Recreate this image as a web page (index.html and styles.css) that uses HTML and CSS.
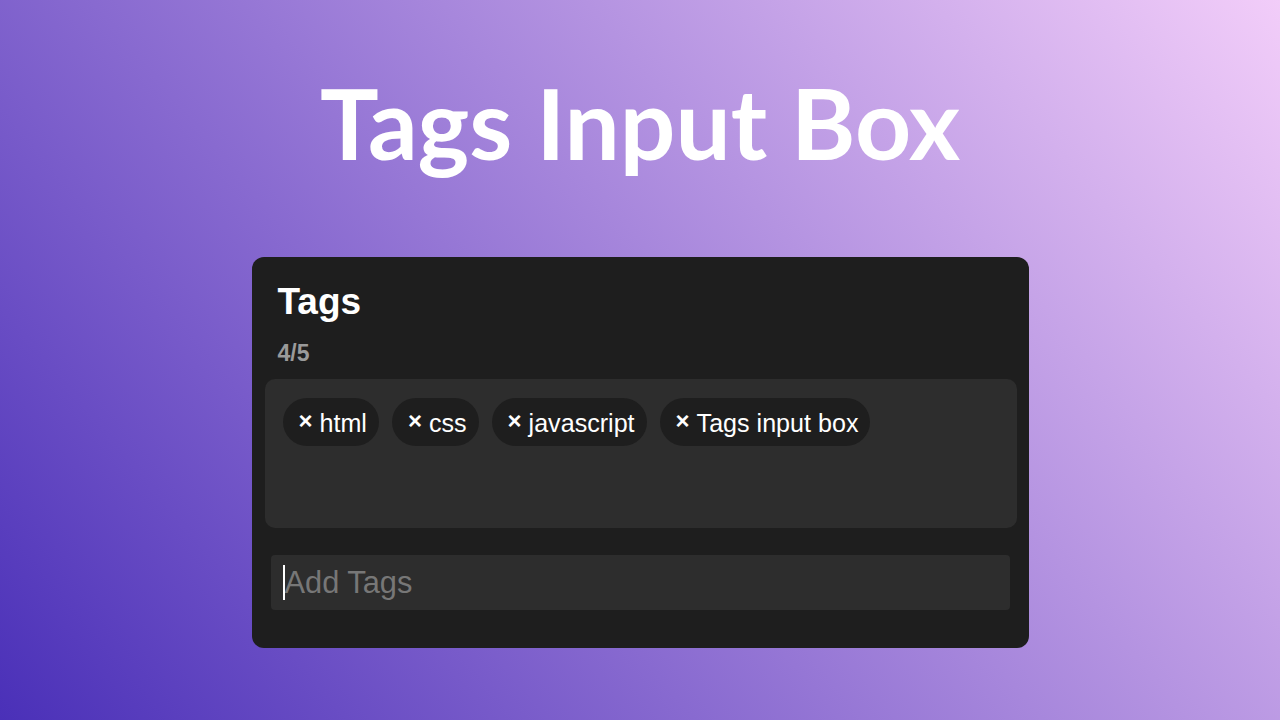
FILE: index.html
```html
<!DOCTYPE html>
<html lang="en">
<head>
<meta charset="utf-8">
<title>Tags Input Box</title>
<link rel="stylesheet" href="styles.css">
</head>
<body>
  <main class="page">
    <h1 class="headline">Tags Input Box</h1>
    <section class="card">
      <h2 class="card-title">Tags</h2>
      <p class="counter">4/5</p>
      <ul class="tag-list">
        <li class="tag"><span class="tag-remove">×</span><span class="tag-text">html</span></li>
        <li class="tag"><span class="tag-remove">×</span><span class="tag-text">css</span></li>
        <li class="tag"><span class="tag-remove">×</span><span class="tag-text">javascript</span></li>
        <li class="tag"><span class="tag-remove">×</span><span class="tag-text">Tags input box</span></li>
      </ul>
      <label class="input-wrap">
        <span class="caret"></span>
        <input class="tag-input" type="text" placeholder="Add Tags">
      </label>
    </section>
  </main>
</body>
</html>
```

FILE: styles.css
```css
* { box-sizing: border-box; }

html, body {
  margin: 0;
  height: 100%;
}

body {
  background: linear-gradient(50deg, #4a30b8 0%, #f2cdf9 100%);
  font-family: "Liberation Sans", Arial, sans-serif;
  overflow: hidden;
}

.page {
  width: 1280px;
  height: 720px;
  display: flex;
  flex-direction: column;
  align-items: center;
}

.headline {
  margin: 67px 0 0;
  font-family: Lato, "Open Sans", sans-serif;
  font-weight: 700;
  font-size: 98px;
  line-height: 110px;
  color: #ffffff;
  letter-spacing: 0;
}

.card {
  margin-top: 80px;
  width: 777px;
  height: 391px;
  background: #1e1e1e;
  border-radius: 12px;
  padding: 24px 12px 0 13px;
  display: flex;
  flex-direction: column;
}

.card-title {
  margin: 0 0 0 13px;
  font-size: 37px;
  line-height: 41px;
  font-weight: 700;
  color: #ffffff;
}

.counter {
  margin: 18px 0 0 13px;
  font-size: 23px;
  line-height: 26px;
  font-weight: 700;
  color: #9a9a9a;
}

.tag-list {
  list-style: none;
  margin: 13px 0 0;
  padding: 19px 18px;
  height: 149px;
  background: #2d2d2d;
  border-radius: 10px;
  display: flex;
  flex-wrap: wrap;
  align-content: flex-start;
  gap: 13px;
}

.tag {
  height: 48px;
  display: flex;
  align-items: center;
  gap: 7px;
  padding: 0 12px 0 16px;
  background: #1e1e1e;
  border-radius: 24px;
  color: #ffffff;
  font-size: 25.1px;
}

.tag-remove {
  font-size: 24px;
  font-weight: 700;
  line-height: 1;
  margin-top: -2px;
}

.tag-text {
  line-height: 29px;
  padding-top: 2px;
}

.input-wrap {
  margin: 27px 7px 0 6px;
  height: 55px;
  background: #2d2d2d;
  border-radius: 4px;
  display: flex;
  align-items: center;
  padding-left: 12px;
}

.caret {
  width: 2px;
  height: 35px;
  background: #ffffff;
  flex: none;
}

.tag-input {
  flex: 1;
  height: 100%;
  border: 0;
  outline: none;
  background: transparent;
  color: #ffffff;
  font-family: "Liberation Sans", Arial, sans-serif;
  font-size: 30.8px;
  padding: 0;
}

.tag-input::placeholder {
  color: #777777;
}
```
